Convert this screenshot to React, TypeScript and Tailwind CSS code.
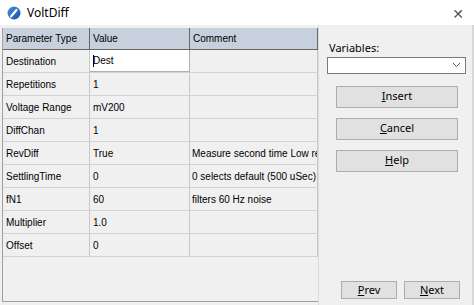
import React from "react";

const rows: [string, string, string][] = [
  ["Destination", "Dest", ""],
  ["Repetitions", "1", ""],
  ["Voltage Range", "mV200", ""],
  ["DiffChan", "1", ""],
  ["RevDiff", "True", "Measure second time Low ref"],
  ["SettlingTime", "0", "0 selects default (500 uSec)"],
  ["fN1", "60", "filters 60 Hz noise"],
  ["Multiplier", "1.0", ""],
  ["Offset", "0", ""],
];

function Btn({ children, className }: { children: React.ReactNode; className: string }) {
  return (
    <div
      className={`flex items-center justify-center bg-[#e1e1e1] border border-[#adadad] text-[11px] text-black ${className}`}
      style={{ fontFamily: '"Noto Sans", "Liberation Sans", sans-serif' }}
    >
      {children}
    </div>
  );
}

export default function App() {
  return (
    <div className="w-[474px] h-[305px] bg-white overflow-hidden relative" style={{ fontFamily: '"Liberation Sans", sans-serif' }}>
      {/* title bar */}
      <div className="h-[25px] flex items-center bg-white">
        <svg width="14" height="14" viewBox="0 0 14 14" className="ml-[7px]">
          <defs>
            <linearGradient id="g" x1="0" y1="0" x2="1" y2="1">
              <stop offset="0" stopColor="#4a8ee0" />
              <stop offset="1" stopColor="#1b4fa8" />
            </linearGradient>
          </defs>
          <circle cx="7" cy="7" r="6.5" fill="url(#g)" />
          <path d="M4 10.5 L9.5 4" stroke="white" strokeWidth="2.2" strokeLinecap="round" />
        </svg>
        <span className="ml-[6px] text-[12px] text-black" style={{ fontFamily: '"Noto Sans", sans-serif' }}>VoltDiff</span>
        <span className="absolute right-[10px] top-[4px] text-[14px] text-[#555]" style={{ fontFamily: '"DejaVu Sans", sans-serif' }}>✕</span>
      </div>
      {/* body */}
      <div className="flex h-[280px] bg-[#f0f0f0] border-r-2 border-[#d8d8d8]">
        {/* grid */}
        <div className="w-[318px] pl-[2px] pt-[3px] pb-[3px] flex flex-col">
          <div className="flex-1 flex flex-col border-l border-b border-[#a0a0a0] text-[10px] text-black">
            <div className="flex h-[22px] bg-[#c6d1dd]">
              <div className="w-[87px] border-r border-b border-[#666] pl-[3px] flex items-center">Parameter Type</div>
              <div className="w-[100px] border-r border-b border-[#666] pl-[3px] flex items-center">Value</div>
              <div className="w-[128px] border-r border-b border-[#666] pl-[3px] flex items-center">Comment</div>
            </div>
            {rows.map(([a, b, c], i) => (
              <div key={a} className="flex h-[23px] border-b border-[#d2d2d2]">
                <div className="w-[87px] border-r border-[#c8c8c8] pl-[3px] flex items-center whitespace-nowrap overflow-hidden">{a}</div>
                {i === 0 ? (
                  <div className="w-[100px] bg-white border-r border-b border-[#b0b0b0] pl-[3px] flex items-center">
                    <span className="w-px h-[12px] bg-black mr-[-1px]" />
                    {b}
                  </div>
                ) : (
                  <div className="w-[100px] border-r border-[#c8c8c8] pl-[3px] flex items-center">{b}</div>
                )}
                <div className="w-[128px] border-r border-[#c8c8c8] pl-[2px] flex items-center whitespace-nowrap overflow-hidden">{c}</div>
              </div>
            ))}
            <div className="flex-1" />
          </div>
        </div>
        {/* right panel */}
        <div className="flex-1 border-l border-[#dcdcdc] relative">
          <div className="text-[11px] text-black mt-[15px] ml-[10px]" style={{ fontFamily: '"Noto Sans", sans-serif' }}>Variables:</div>
          <div className="ml-[8px] mt-[0px] w-[139px] h-[17px] bg-white border border-[#7a7a7a] flex items-center justify-end pr-[4px]">
            <svg width="9" height="6" viewBox="0 0 9 6">
              <path d="M1 1 L4.5 4.5 L8 1" stroke="#555" strokeWidth="1" fill="none" />
            </svg>
          </div>
          <div className="ml-[17px] mt-[12px] flex flex-col gap-[10px]">
            <Btn className="w-[122px] h-[22px]"><span><span className="underline">I</span>nsert</span></Btn>
            <Btn className="w-[122px] h-[22px]"><span><span className="underline">C</span>ancel</span></Btn>
            <Btn className="w-[122px] h-[22px]"><span><span className="underline">H</span>elp</span></Btn>
          </div>
          <div className="absolute left-[22px] top-[256px] flex gap-[7px]">
            <Btn className="w-[56px] h-[18px]"><span><span className="underline">P</span>rev</span></Btn>
            <Btn className="w-[56px] h-[18px]"><span><span className="underline">N</span>ext</span></Btn>
          </div>
        </div>
      </div>
    </div>
  );
}
